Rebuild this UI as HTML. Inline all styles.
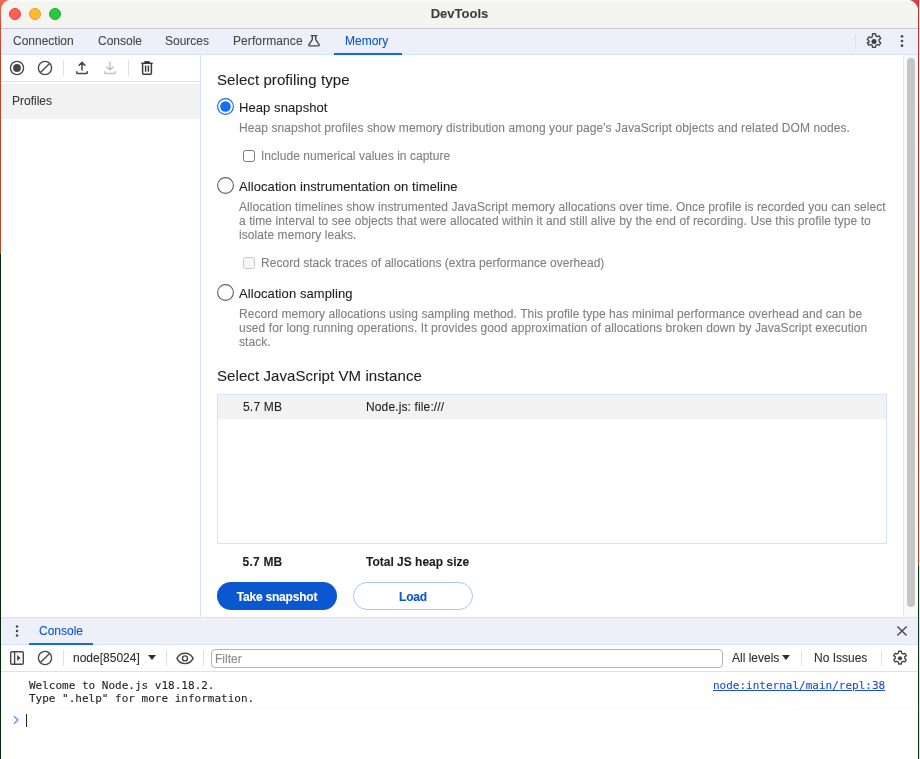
<!DOCTYPE html>
<html lang="en">
<head>
<meta charset="utf-8">
<title>DevTools</title>
<style>
*{box-sizing:border-box;margin:0;padding:0}
html,body{width:920px;height:759px;overflow:hidden}
body{font-family:"Liberation Sans",sans-serif;font-size:12px;color:#1f1f1f;position:relative;background:#dfe8ea}
.abs{position:absolute}
.t{position:absolute;white-space:nowrap;line-height:14px;-webkit-text-stroke:.1px currentColor}
/* wallpaper strips */
#wl1{left:0;top:0;width:12px;height:254px;background:linear-gradient(#f26b4c 0,#cc4f30 26px,#ba492a 60px,#b8482a 100%)}
#wl2{left:0;top:254px;width:12px;height:505px;background:#002a08}
#wr0{left:908px;top:0;width:11px;height:30px;background:#d94040}
#wr1{left:918px;top:0;width:1px;height:566px;background:linear-gradient(#c03030,#963c30 50%,#98492f)}
#wr2{left:918px;top:566px;width:1px;height:193px;background:#0a3318}
#wr3{left:919px;top:0;width:1px;height:759px;background:#dde6e8}
#win{left:1px;top:0;width:917px;height:759px;background:#fff;border-radius:10px 11px 0 0;overflow:hidden;will-change:transform}
#titlebar{left:0;top:0;width:917px;height:28px;background:#f4f4f1;box-shadow:inset 0 1px 0 #fafaf9}
#tbline{left:0;top:28px;width:917px;height:1px;background:#c6c9d1}
.light{position:absolute;top:8px;width:12px;height:12px;border-radius:50%}
#title{left:0;width:917px;top:6px;text-align:center;font-weight:bold;font-size:13px;color:#3d3d3d;line-height:15px}
#tabbar{left:0;top:29px;width:917px;height:25px;background:#edf0f9}
#tabline{left:0;top:54px;width:917px;height:1px;background:#d3e3fd}
.tab{color:#474747;top:34px}
#memline{left:333px;top:53px;width:68px;height:2px;background:#0d6af0}

/* sidebar */
#sidebar{left:0;top:55px;width:199px;height:562px;background:#fff}
#sbline{left:199px;top:55px;width:1px;height:562px;background:#d3e3fd}
#sbtoolline{left:0;top:81px;width:199px;height:1px;background:#d3e3fd}
#profhdr{left:0;top:84px;width:199px;height:35px;background:#f2f2f2}
#proftxt{left:11px;top:94px;color:#3b3b3b}
.vdiv{position:absolute;width:1px;background:#d3e3fd}
svg{position:absolute;overflow:visible}
/* main */
.h1{font-size:15px;line-height:18px;color:#1f1f1f;letter-spacing:.08px}
.rl{font-size:13px;line-height:16px;color:#1f1f1f;left:238px;letter-spacing:.085px}
.desc{color:#808080;left:238px;line-height:14px;letter-spacing:.07px}
.desc span{display:block}
.radio{position:absolute;left:216px;width:17px;height:17px;border-radius:50%;border:1px solid #6e6e6e;background:#fff}
.radio.on{border:1.5px solid #1a6cf0;}
.radio.on::after{content:"";position:absolute;left:2px;top:2px;width:10px;height:10px;border-radius:50%;background:#1a6cf0}
.cb{position:absolute;left:242px;width:12px;height:12px;border:1px solid #7a7a7a;border-radius:2.5px;background:#fff}
.cb.dis{border-color:#c8c8c8;background:#f7f7f7}
.cbl{left:260px;color:#808080;letter-spacing:.03px}
#vmtable{left:216px;top:394px;width:670px;height:150px;border:1px solid #d3e3fd;background:#fff}
#vmrow{left:217px;top:395px;width:668px;height:24px;background:#f2f2f2}
.b{font-weight:bold}
#btn1{left:216px;top:582px;width:120px;height:28px;border-radius:14px;background:#0b57d0}
#btn2{left:352px;top:582px;width:120px;height:28px;border-radius:14px;background:#fff;border:1px solid #a8c7fa}
#btn1t{left:216px;width:120px;text-align:center;top:590px;color:#fff;font-weight:bold;letter-spacing:-.2px}
#btn2t{left:352px;width:120px;text-align:center;top:590px;color:#0b57d0;font-weight:bold;letter-spacing:-.2px}
/* scrollbar */
#sctrack{left:902px;top:55px;width:15px;height:562px;background:#fafafa;border-left:1px solid #e8e8e8}
#scthumb{left:906px;top:58px;width:8px;height:549px;border-radius:4px;background:#c6c6c6}
/* drawer */
#drline{left:0;top:617px;width:917px;height:1px;background:#d3e3fd}
#drbar{left:0;top:618px;width:917px;height:26px;background:#edf0f9}
#drline2{left:0;top:644px;width:917px;height:1px;background:#d3e3fd}
#drtab{left:38px;top:624px;color:#0b57d0}
#drul{left:28px;top:643px;width:64px;height:2px;background:#0d6af0}
#ctline{left:0;top:671px;width:917px;height:1px;background:#d3e3fd}
#filter{left:210px;top:649px;width:512px;height:19px;border:1px solid #b4b4b4;border-radius:4px;background:#fff}
#filtertxt{left:214px;top:652px;color:#8a8a8a}
.ct{color:#303030;top:651px}
.mono{font-family:"DejaVu Sans Mono","Liberation Mono",monospace;font-size:11px;line-height:13px;color:#1f1f1f}
#msgline{left:0;top:708px;width:917px;height:1px;background:#fbfbfb}
#cursor{left:25px;top:714px;width:1px;height:13px;background:#222}
</style>
</head>
<body>
<div class="abs" id="wl1"></div><div class="abs" id="wl2"></div>
<div class="abs" id="wr0"></div><div class="abs" id="wr1"></div><div class="abs" id="wr2"></div><div class="abs" id="wr3"></div>
<div class="abs" id="win">
  <div class="abs" id="titlebar"></div>
  <div class="abs" id="tbline"></div>
  <div class="light" style="left:8px;background:#fe5f57;border:1px solid #e2443e"></div>
  <div class="light" style="left:28px;background:#febc2e;border:1px solid #dfa023"></div>
  <div class="light" style="left:48px;background:#28c840;border:1px solid #1dad2b"></div>
  <div class="t" id="title">DevTools</div>
  <div class="abs" id="tabbar"></div>
  <div class="abs" id="tabline"></div>
  <div class="t tab" id="tab1" style="left:12px">Connection</div>
  <div class="t tab" id="tab2" style="left:97px">Console</div>
  <div class="t tab" id="tab3" style="left:164px">Sources</div>
  <div class="t tab" id="tab4" style="left:232px;letter-spacing:.09px">Performance</div>
  <div class="t tab" id="tab5" style="left:344px;color:#0b57d0">Memory</div>
  <div class="abs" id="memline"></div>

  <!-- right side of tab bar -->
  <div class="vdiv" style="left:854px;top:33px;height:16px"></div>
  <svg id="gear1" style="left:863px;top:31.300px" width="20" height="20" viewBox="0 0 20 20"><g fill="none" stroke="#474747" stroke-width="1.4" stroke-linejoin="round"><path d="M8.6 2.8h2.8l.4 2 1.5.85 1.95-.65 1.4 2.4-1.55 1.35v1.7l1.55 1.35-1.4 2.4-1.95-.65-1.5.85-.4 2H8.6l-.4-2-1.5-.85-1.95.65-1.4-2.4L4.9 11.45v-1.7L3.35 8.4l1.4-2.4 1.95.65 1.5-.85z"/></g><circle cx="10" cy="10.6" r="2.500" fill="#3c3c3c"/></svg>
  <svg id="dots1" style="left:891px;top:31px" width="20" height="20" viewBox="0 0 20 20"><g fill="#474747"><circle cx="10" cy="5.3" r="1.35"/><circle cx="10" cy="10" r="1.35"/><circle cx="10" cy="14.7" r="1.35"/></g></svg>
  <!-- flask -->
  <svg id="flask" style="left:303px;top:31px" width="20" height="20" viewBox="0 0 20 20"><path d="M7.2 4.6h5.6M8.3 4.8v3.9L4.9 13.6c-.4.6 0 1.3.7 1.3h8.8c.7 0 1.1-.7.7-1.3l-3.4-4.9V4.8" fill="none" stroke="#474747" stroke-width="1.4" stroke-linecap="round" stroke-linejoin="round"/></svg>

  <!-- sidebar -->
  <div class="abs" id="sidebar"></div>
  <div class="abs" id="sbline"></div>
  <div class="abs" id="sbtoolline"></div>
  <svg id="icrec" style="left:6px;top:58px" width="20" height="20" viewBox="0 0 20 20"><circle cx="10" cy="10" r="6.6" fill="none" stroke="#474747" stroke-width="1.35"/><circle cx="10" cy="10" r="3.900" fill="#474747"/></svg>
  <svg id="icclr" style="left:34px;top:58px" width="20" height="20" viewBox="0 0 20 20"><circle cx="10" cy="10" r="6.6" fill="none" stroke="#474747" stroke-width="1.35"/><path d="M5.4 14.6L14.6 5.4" stroke="#474747" stroke-width="1.35"/></svg>
  <div class="vdiv" style="left:62px;top:60px;height:16px"></div>
  <svg id="icup" style="left:71px;top:58px" width="20" height="20" viewBox="0 0 20 20"><path d="M10 12.5V4.6M6.6 7.7L10 4.3l3.4 3.4M4.8 13.2v1.5c0 .5.4.9.9.9h8.6c.5 0 .9-.4.9-.9v-1.5" fill="none" stroke="#474747" stroke-width="1.5" stroke-linejoin="round"/></svg>
  <svg id="icdn" style="left:99px;top:58px" width="20" height="20" viewBox="0 0 20 20"><path d="M10 3.8v8M6.6 8.6L10 12l3.4-3.4M4.8 13.2v1.5c0 .5.4.9.9.9h8.6c.5 0 .9-.4.9-.9v-1.5" fill="none" stroke="#c4c4c4" stroke-width="1.5" stroke-linejoin="round"/></svg>
  <div class="vdiv" style="left:127px;top:60px;height:16px"></div>
  <svg id="ictrash" style="left:136px;top:58px" width="20" height="20" viewBox="0 0 20 20"><path d="M4.3 5.3h11.4M8 5V3.8h4V5M5.6 5.6v9.6c0 .6.4 1 1 1h6.8c.6 0 1-.4 1-1V5.6" fill="none" stroke="#3c3c3c" stroke-width="1.5" stroke-linejoin="round"/><path d="M8.6 7.6v6.2M11.4 7.6v6.2" stroke="#3c3c3c" stroke-width="1.5"/></svg>
  <div class="abs" id="profhdr"></div>
  <div class="t" id="proftxt">Profiles</div>

  <!-- main -->
  <div class="t h1" id="h1a" style="left:216px;top:71px">Select profiling type</div>
  <svg id="r1" style="left:216px;top:98px" width="17" height="17" viewBox="0 0 17 17"><circle cx="8.5" cy="8.5" r="7.9" fill="#fff" stroke="#1a6cf0" stroke-width="1.2"/><circle cx="8.5" cy="8.5" r="5.3" fill="#1a6cf0"/></svg>
  <div class="t rl" id="rl1" style="top:100px">Heap snapshot</div>
  <div class="t desc" id="d1" style="top:121px;letter-spacing:.085px">Heap snapshot profiles show memory distribution among your page's JavaScript objects and related DOM nodes.</div>
  <div class="cb" id="cb1" style="top:150px"></div>
  <div class="t cbl" id="cbl1" style="top:149px">Include numerical values in capture</div>
  <svg id="r2" style="left:216px;top:177px" width="17" height="17" viewBox="0 0 17 17"><circle cx="8.5" cy="8.5" r="7.9" fill="#fff" stroke="#666" stroke-width="1.15"/></svg>
  <div class="t rl" id="rl2" style="top:179px">Allocation instrumentation on timeline</div>
  <div class="t desc" id="d2" style="top:200px"><span style="letter-spacing:.06px">Allocation timelines show instrumented JavaScript memory allocations over time. Once profile is recorded you can select</span><span>a time interval to see objects that were allocated within it and still alive by the end of recording. Use this profile type to</span><span>isolate memory leaks.</span></div>
  <div class="cb dis" id="cb2" style="top:257px"></div>
  <div class="t cbl" id="cbl2" style="top:256px">Record stack traces of allocations (extra performance overhead)</div>
  <svg id="r3" style="left:216px;top:284px" width="17" height="17" viewBox="0 0 17 17"><circle cx="8.5" cy="8.5" r="7.9" fill="#fff" stroke="#666" stroke-width="1.15"/></svg>
  <div class="t rl" id="rl3" style="top:286px">Allocation sampling</div>
  <div class="t desc" id="d3" style="top:307px"><span style="letter-spacing:.052px">Record memory allocations using sampling method. This profile type has minimal performance overhead and can be</span><span style="letter-spacing:.087px">used for long running operations. It provides good approximation of allocations broken down by JavaScript execution</span><span>stack.</span></div>
  <div class="t h1" id="h1b" style="left:216px;top:367px">Select JavaScript VM instance</div>
  <div class="abs" id="vmtable"></div>
  <div class="abs" id="vmrow"></div>
  <div class="t" id="vm1" style="left:242px;top:400px;letter-spacing:.2px">5.7 MB</div>
  <div class="t" id="vm2" style="left:365px;top:400px;letter-spacing:.13px">Node.js: file:///</div>
  <div class="t b" id="tot1" style="left:241.600px;top:555px;letter-spacing:.2px">5.7 MB</div>
  <div class="t b" id="tot2" style="left:365px;top:555px">Total JS heap size</div>
  <div class="abs" id="btn1"></div><div class="t" id="btn1t">Take snapshot</div>
  <div class="abs" id="btn2"></div><div class="t" id="btn2t">Load</div>
  <div class="abs" id="sctrack"></div><div class="abs" id="scthumb"></div>

  <!-- drawer -->
  <div class="abs" id="drline"></div>
  <div class="abs" id="drbar"></div>
  <div class="abs" id="drline2"></div>
  <svg id="dots2" style="left:6px;top:621px" width="20" height="20" viewBox="0 0 20 20"><g fill="#474747"><circle cx="10" cy="5.6" r="1.25"/><circle cx="10" cy="10" r="1.25"/><circle cx="10" cy="14.4" r="1.25"/></g></svg>
  <div class="t" id="drtab">Console</div>
  <div class="abs" id="drul"></div>
  <svg id="closex" style="left:891px;top:621px" width="20" height="20" viewBox="0 0 20 20"><path d="M5.4 5.4l9.2 9.2M14.6 5.4l-9.2 9.2" stroke="#474747" stroke-width="1.4"/></svg>
  <!-- console toolbar -->
  <svg id="icside" style="left:6px;top:648px" width="20" height="20" viewBox="0 0 20 20"><rect x="3.7" y="3.7" width="12.6" height="12.6" rx="1.2" fill="none" stroke="#474747" stroke-width="1.4"/><path d="M7.6 3.7v12.6" stroke="#474747" stroke-width="1.4"/><path d="M10.1 6.900l3.500 3.100-3.500 3.100z" fill="#474747"/></svg>
  <svg id="icclr2" style="left:34px;top:648px" width="20" height="20" viewBox="0 0 20 20"><circle cx="10" cy="10" r="6.6" fill="none" stroke="#474747" stroke-width="1.35"/><path d="M5.4 14.6L14.6 5.4" stroke="#474747" stroke-width="1.35"/></svg>
  <div class="vdiv" style="left:62px;top:650px;height:16px"></div>
  <div class="t ct" id="ctx" style="left:72px">node[85024]</div>
  <svg id="tri1" style="left:147px;top:655px" width="8" height="5" viewBox="0 0 8 5"><path d="M0 0h8L4 5z" fill="#303030"/></svg>
  <div class="vdiv" style="left:165px;top:650px;height:16px"></div>
  <svg id="iceye" style="left:174px;top:647.5px" width="20" height="20" viewBox="0 0 20 20"><path d="M1.9 10.4C3.4 7.2 6.4 5.2 10 5.2s6.600 2 8.100 5.200c-1.500 3.200-4.500 5.200-8.100 5.200s-6.600-2-8.100-5.200z" fill="none" stroke="#474747" stroke-width="1.4"/><circle cx="10" cy="10.400" r="2.500" fill="none" stroke="#474747" stroke-width="1.4"/></svg>
  <div class="vdiv" style="left:202px;top:650px;height:16px"></div>
  <div class="abs" id="filter"></div>
  <div class="t" id="filtertxt">Filter</div>
  <div class="t ct" id="lvl" style="left:731px">All levels</div>
  <svg id="tri2" style="left:781px;top:655px" width="8" height="5" viewBox="0 0 8 5"><path d="M0 0h8L4 5z" fill="#303030"/></svg>
  <div class="vdiv" style="left:800px;top:650px;height:16px"></div>
  <div class="t ct" id="noiss" style="left:813px">No Issues</div>
  <div class="vdiv" style="left:880px;top:650px;height:16px"></div>
  <svg id="gear2" style="left:889px;top:648px" width="20" height="20" viewBox="0 0 20 20"><g fill="none" stroke="#474747" stroke-width="1.4" stroke-linejoin="round"><path d="M8.7 3.300h2.600l.4 1.900 1.400.8 1.800-.6 1.300 2.200-1.450 1.250v1.600l1.450 1.250-1.300 2.200-1.800-.6-1.400.8-.4 1.900H8.700l-.4-1.900-1.400-.8-1.800.6-1.300-2.200 1.450-1.250v-1.600L3.800 7.600l1.300-2.200 1.800.6 1.400-.8z"/></g><circle cx="10" cy="10.300" r="2.100" fill="#474747"/></svg>
  <div class="abs" id="ctline"></div>
  <!-- messages -->
  <div class="t mono" id="msg1" style="left:28px;top:679px">Welcome to Node.js v18.18.2.<br>Type ".help" for more information.</div>
  <div class="t mono" id="lnk" style="left:712px;top:679px;color:#1a4fd0;text-decoration:underline">node:internal/main/repl:38</div>
  <div class="abs" id="msgline"></div>
  <svg id="prompt" style="left:11px;top:714px" width="8" height="12" viewBox="0 0 8 12"><path d="M2 2.300l4 3.700-4 3.700" fill="none" stroke="#5a8cff" stroke-width="1.25"/></svg>
  <div class="abs" id="cursor"></div>
</div>
</body>
</html>
